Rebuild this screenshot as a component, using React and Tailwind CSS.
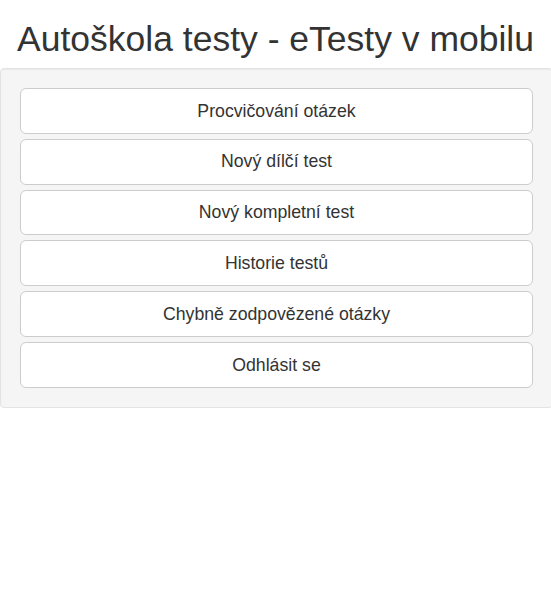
import React from 'react';

const items = [
  'Procvičování otázek',
  'Nový dílčí test',
  'Nový kompletní test',
  'Historie testů',
  'Chybně zodpovězené otázky',
  'Odhlásit se',
];

export default function App() {
  return (
    <div className="min-h-[611px] overflow-hidden bg-white text-[#333] font-['Liberation_Sans',Arial,sans-serif]">
      <h1 className="mt-5 mb-[9px] text-center text-[35.5px] leading-[1.1] font-normal whitespace-nowrap">
        Autoškola testy - eTesty v mobilu
      </h1>
      <div className="w-[553px] rounded border border-[#e3e3e3] bg-[#f5f5f5] p-[19px] shadow-[inset_0_1px_1px_rgba(0,0,0,0.05)]">
        <div className="flex flex-col gap-[5px]">
          {items.map((label) => (
            <button
              key={label}
              className="h-[45.8px] w-full rounded-md border border-[#ccc] bg-white px-4 pt-[1px] text-[17.7px] leading-[1.33] text-[#333]"
            >
              {label}
            </button>
          ))}
        </div>
      </div>
    </div>
  );
}
